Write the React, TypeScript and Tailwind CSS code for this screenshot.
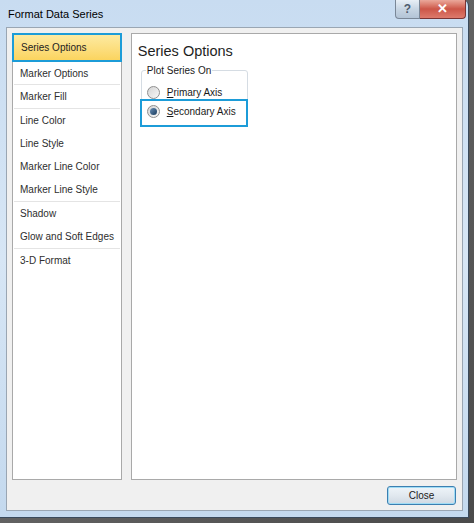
import React from 'react';

const font = { fontFamily: '"Liberation Sans", Arial, sans-serif' };

const groups: string[][] = [
  ['Marker Options'],
  ['Marker Fill'],
  ['Line Color', 'Line Style', 'Marker Line Color', 'Marker Line Style'],
  ['Shadow', 'Glow and Soft Edges'],
  ['3-D Format'],
];

function Radio({ checked }: { checked?: boolean }) {
  return (
    <span className="flex h-[13px] w-[13px] shrink-0 items-center justify-center rounded-full border border-[#8f8f8f] bg-gradient-to-br from-[#d4d4d4] to-[#f8f8f8]">
      {checked && (
        <span className="h-[7px] w-[7px] rounded-full bg-gradient-to-br from-[#6a8fb5] to-[#173b5e]" />
      )}
    </span>
  );
}

export default function App() {
  return (
    <div className="h-[523px] w-[474px] bg-gradient-to-br from-[#7a7a7a] to-[#4a4a4a]" style={font}>
      <div className="flex h-[518px] w-[469px] flex-col rounded-tr-[6px] border-r border-b border-[#3a4a5c] bg-gradient-to-b from-[#c8dcf1] via-[#d7e6f5] to-[#c4d9ee]">
        {/* title bar */}
        <div className="flex h-[27px] items-start">
          <div className="pl-[8px] pt-[7px] text-[11px] leading-[14px] text-black">Format Data Series</div>
          <div className="ml-auto mr-[2px] flex">
            <div className="flex h-[19px] w-[25px] items-center justify-center rounded-bl-[4px] border border-t-0 border-[#7a8797] bg-gradient-to-b from-[#e8eff6] via-[#c7d5e3] to-[#b3c4d6] text-[12px] font-bold text-[#4d5c6e]">
              ?
            </div>
            <div className="flex h-[19px] w-[46px] items-center justify-center rounded-br-[4px] border border-t-0 border-l-0 border-[#7a3434] bg-gradient-to-b from-[#eaa89b] via-[#cc5648] to-[#dd7a6c] text-[13px] font-bold text-white">
              ✕
            </div>
          </div>
        </div>

        {/* client area */}
        <div className="ml-[6px] mr-[5px] mb-[6px] flex flex-1 flex-col border border-[#9aa6b3] bg-[#f0f0f0] px-[5px] pt-[5px]">
          <div className="flex gap-[9px]">
            {/* category list */}
            <div className="flex h-[447px] w-[110px] flex-col border border-[#a9a9a9] bg-white text-[10px] text-[#2e2e2e] whitespace-nowrap">
              <div className="-mx-px -mt-px flex h-[29px] items-center border-2 border-[#1c9cd8] bg-gradient-to-b from-[#fdeaa0] to-[#fbd45e] pl-[7px] text-[#222]">
                Series Options
              </div>
              {groups.map((g, gi) => (
                <div key={gi} className={gi > 0 ? 'mx-px border-t border-[#e4e4e4]' : 'mx-px'}>
                  {g.map((item) => (
                    <div key={item} className={`flex items-center pl-[6px] ${gi === 0 ? 'h-[22px]' : 'h-[23px]'}`}>
                      {item}
                    </div>
                  ))}
                </div>
              ))}
            </div>

            {/* options pane */}
            <div className="flex h-[447px] w-[327px] flex-col border border-[#a9a9a9] bg-white pl-[6px] pt-[6px]">
              <div className="text-[14.5px] leading-[22px] text-[#1e1e1e]">Series Options</div>
              <div className="relative ml-[3px] mt-[2px] w-[107px] whitespace-nowrap">
                <fieldset className="h-[63px] rounded-[3px] border border-[#d5dce3] pl-[4px]">
                  <legend className="px-[1px] text-[10px] leading-[13px] text-[#1a1a1a]">Plot Series On</legend>
                  <div className="mt-[9px] flex items-center gap-[7px] pl-[1px] text-[10px] leading-[13px] text-[#1a1a1a]">
                    <Radio />
                    <span>
                      <span className="underline">P</span>rimary Axis
                    </span>
                  </div>
                  <div className="mt-[6px] flex items-center gap-[7px] pl-[1px] text-[10px] leading-[13px] text-[#1a1a1a]">
                    <Radio checked />
                    <span>
                      <span className="underline">S</span>econdary Axis
                    </span>
                  </div>
                </fieldset>
                {/* annotation box */}
                <div className="pointer-events-none absolute left-[-1px] top-[35px] h-[28px] w-[108px] border-2 border-[#1c9cd8]" />
              </div>
            </div>
          </div>

          <div className="flex flex-1 items-center justify-end pr-[1px]">
            <button className="h-[19px] w-[69px] rounded-[3px] border border-[#3c7fb1] bg-gradient-to-b from-[#eef4f9] via-[#e1e8ef] to-[#cfd9e3] text-[10px] leading-[15px] text-[#1a1a1a] shadow-[inset_0_0_0_1px_#9fdcf5]">
              Close
            </button>
          </div>
        </div>
      </div>
    </div>
  );
}
